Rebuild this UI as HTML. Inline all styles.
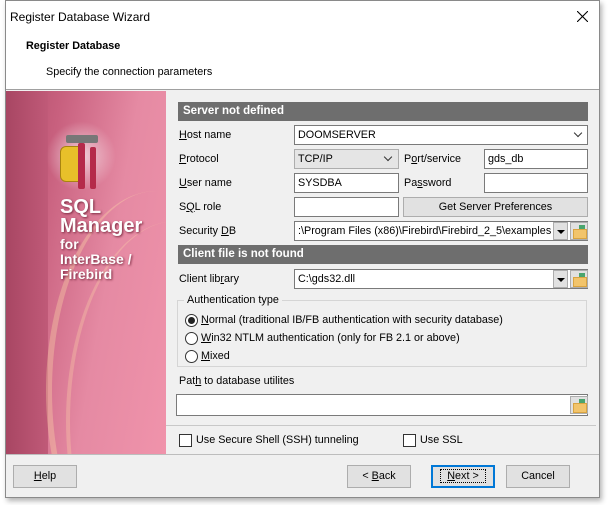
<!DOCTYPE html>
<html><head><meta charset="utf-8"><style>
*{box-sizing:border-box}
html,body{margin:0;width:608px;height:505px;overflow:hidden}
body{background:#fff;font-family:"Liberation Sans",Arial,sans-serif;font-size:11px;color:#000;position:relative}
.a{position:absolute}
.win{left:5px;top:0;width:595px;height:498px;border:1px solid #8a8a8a;background:#f0f0f0;box-shadow:2px 3px 5px rgba(0,0,0,.3)}
.lbl{position:absolute;font-size:10.8px;line-height:13px;white-space:nowrap}
.inp{position:absolute;background:#fff;border:1px solid #7a7a7a;height:20px;padding:3px 0 0 3px;font-size:10.8px;white-space:nowrap;overflow:hidden}
.hdr{position:absolute;left:178px;width:410px;height:19px;background:#6e6e6e;color:#fff;font-weight:bold;font-size:11.5px;padding:3px 0 0 5px}
.btn{position:absolute;height:23px;background:#e1e1e1;border:1px solid #adadad;text-align:center;line-height:21px;font-size:10.8px}
.dd{position:absolute;width:15px;height:18px;background:#e1e1e1;border:1px solid #adadad}
.dd:after{content:"";position:absolute;left:3px;top:7px;border-left:4px solid transparent;border-right:4px solid transparent;border-top:4px solid #000}
.fold{position:absolute;width:18px;height:18px;background:#e1e1e1;border:1px solid #adadad}
.fold:before{content:"";position:absolute;left:2px;top:6px;width:12px;height:8px;background:#f2c46b;border:1px solid #d9a441}
.fold:after{content:"";position:absolute;left:8px;top:2px;width:6px;height:4px;background:#4aa56e}
.chev{position:absolute;width:6px;height:6px;border-right:1px solid #333;border-bottom:1px solid #333;transform:rotate(45deg)}
.rad{position:absolute;width:13px;height:13px;border:1px solid #333;border-radius:50%;background:#fff}
.chk{position:absolute;width:13px;height:13px;border:1px solid #333;background:#fff}
u{text-decoration:underline}
</style></head><body>
<div class="a win"></div>
<div class="a" style="left:6px;top:1px;width:593px;height:88px;background:#fff"></div>
<div class="lbl" style="left:10px;top:11px;font-size:12px">Register Database Wizard</div>
<svg class="a" style="left:577px;top:11px" width="11" height="11"><path d="M0 0L11 11M11 0L0 11" stroke="#000" stroke-width="1.1"/></svg>
<div class="lbl" style="left:26px;top:40px;font-weight:bold">Register Database</div>
<div class="lbl" style="left:46px;top:66px">Specify the connection parameters</div>
<div class="a" style="left:6px;top:89px;width:593px;height:1px;background:#a0a0a0"></div>
<!-- left image -->
<div class="a" style="left:6px;top:91px;width:160px;height:363px;background:linear-gradient(100deg,#b04d6a 0%,#c8607e 25%,#e58aa3 60%,#f093ab 100%);overflow:hidden">
 <div class="a" style="left:0;top:0;width:42px;height:363px;background:linear-gradient(90deg,#a84663,#c05a78)"></div>
 <div class="a" style="left:40px;top:100px;width:220px;height:400px;border-radius:50%;border-left:6px solid rgba(255,220,170,.35)"></div>
 <div class="a" style="left:60px;top:130px;width:220px;height:400px;border-radius:50%;border-left:4px solid rgba(255,220,170,.3)"></div>
 <div class="a" style="left:40px;top:30px;width:70px;height:70px;border-radius:50%;background:radial-gradient(#fffa ,#fff0 70%)"></div>
 <div class="a" style="left:54px;top:55px;width:24px;height:36px;border-radius:6px;background:#e8c02a;border:1px solid #a88410"></div>
 <div class="a" style="left:60px;top:44px;width:32px;height:8px;background:#777;border-radius:2px"></div>
 <div class="a" style="left:72px;top:52px;width:7px;height:46px;background:#b52a4a;border-radius:2px"></div>
 <div class="a" style="left:84px;top:56px;width:6px;height:42px;background:#b52a4a;border-radius:2px"></div>
 <div class="a" style="left:54px;top:107px;color:#fff;font-weight:bold;font-size:20px;line-height:19px;text-shadow:1px 1px 2px #7a2a40">SQL<br>Manager</div>
 <div class="a" style="left:54px;top:146px;color:#fff;font-weight:bold;font-size:14px;line-height:15px;text-shadow:1px 1px 2px #7a2a40">for<br>InterBase /<br>Firebird</div>
</div>
<!-- right -->
<div class="hdr" style="top:102px">Server not defined</div>
<div class="lbl" style="left:179px;top:129px"><u>H</u>ost name</div>
<div class="inp" style="left:294px;top:125px;width:294px">DOOMSERVER</div>
<div class="chev" style="left:575px;top:130px"></div>
<div class="lbl" style="left:179px;top:153px"><u>P</u>rotocol</div>
<div class="inp" style="left:294px;top:149px;width:105px;background:#e5e5e5;border-color:#adadad">TCP/IP</div>
<div class="chev" style="left:385px;top:154px"></div>
<div class="lbl" style="left:404px;top:153px">P<u>o</u>rt/service</div>
<div class="inp" style="left:484px;top:149px;width:104px">gds_db</div>
<div class="lbl" style="left:179px;top:177px"><u>U</u>ser name</div>
<div class="inp" style="left:294px;top:173px;width:105px">SYSDBA</div>
<div class="lbl" style="left:404px;top:177px">Pa<u>s</u>sword</div>
<div class="inp" style="left:484px;top:173px;width:104px"></div>
<div class="lbl" style="left:179px;top:201px">S<u>Q</u>L role</div>
<div class="inp" style="left:294px;top:197px;width:105px"></div>
<div class="btn" style="left:403px;top:197px;width:185px;height:20px;line-height:18px">Get Server Preferences</div>
<div class="lbl" style="left:179px;top:225px">Security <u>D</u>B</div>
<div class="inp" style="left:294px;top:221px;width:294px">:\Program Files (x86)\Firebird\Firebird_2_5\examples</div>
<div class="dd" style="left:553px;top:222px"></div>
<div class="fold" style="left:570px;top:222px"></div>
<div class="hdr" style="top:245px">Client file is not found</div>
<div class="lbl" style="left:179px;top:273px">Client lib<u>r</u>ary</div>
<div class="inp" style="left:294px;top:269px;width:294px">C:\gds32.dll</div>
<div class="dd" style="left:553px;top:270px"></div>
<div class="fold" style="left:570px;top:270px"></div>
<div class="a" style="left:177px;top:300px;width:410px;height:67px;border:1px solid #d5d5d5"></div>
<div class="lbl" style="left:184px;top:294px;background:#f0f0f0;padding:0 3px">Authentication type</div>
<div class="rad" style="left:185px;top:314px"><div class="a" style="left:2px;top:2px;width:7px;height:7px;border-radius:50%;background:#222"></div></div>
<div class="lbl" style="left:201px;top:314px"><u>N</u>ormal (traditional IB/FB authentication with security database)</div>
<div class="rad" style="left:185px;top:332px"></div>
<div class="lbl" style="left:201px;top:332px"><u>W</u>in32 NTLM authentication (only for FB 2.1 or above)</div>
<div class="rad" style="left:185px;top:350px"></div>
<div class="lbl" style="left:201px;top:350px"><u>M</u>ixed</div>
<div class="lbl" style="left:179px;top:375px">Pat<u>h</u> to database utilites</div>
<div class="inp" style="left:176px;top:394px;width:412px;height:22px"></div>
<div class="fold" style="left:570px;top:396px"></div>
<div class="a" style="left:166px;top:425px;width:430px;height:1px;background:#c8c8c8"></div>
<div class="chk" style="left:179px;top:434px"></div>
<div class="lbl" style="left:196px;top:434px">Use Secure Shell (SSH) tunneling</div>
<div class="chk" style="left:403px;top:434px"></div>
<div class="lbl" style="left:420px;top:434px">Use SSL</div>
<div class="a" style="left:6px;top:454px;width:593px;height:1px;background:#bdbdbd"></div>
<div class="btn" style="left:13px;top:465px;width:64px"><u>H</u>elp</div>
<div class="btn" style="left:347px;top:465px;width:64px">&lt; <u>B</u>ack</div>
<div class="btn" style="left:431px;top:465px;width:64px;border:1px solid #0078d7;box-shadow:inset 0 0 0 1px #0078d7"><span style="border:1px dotted #000;padding:0 6px"><u>N</u>ext &gt;</span></div>
<div class="btn" style="left:506px;top:465px;width:64px">Cancel</div>
</body></html>
